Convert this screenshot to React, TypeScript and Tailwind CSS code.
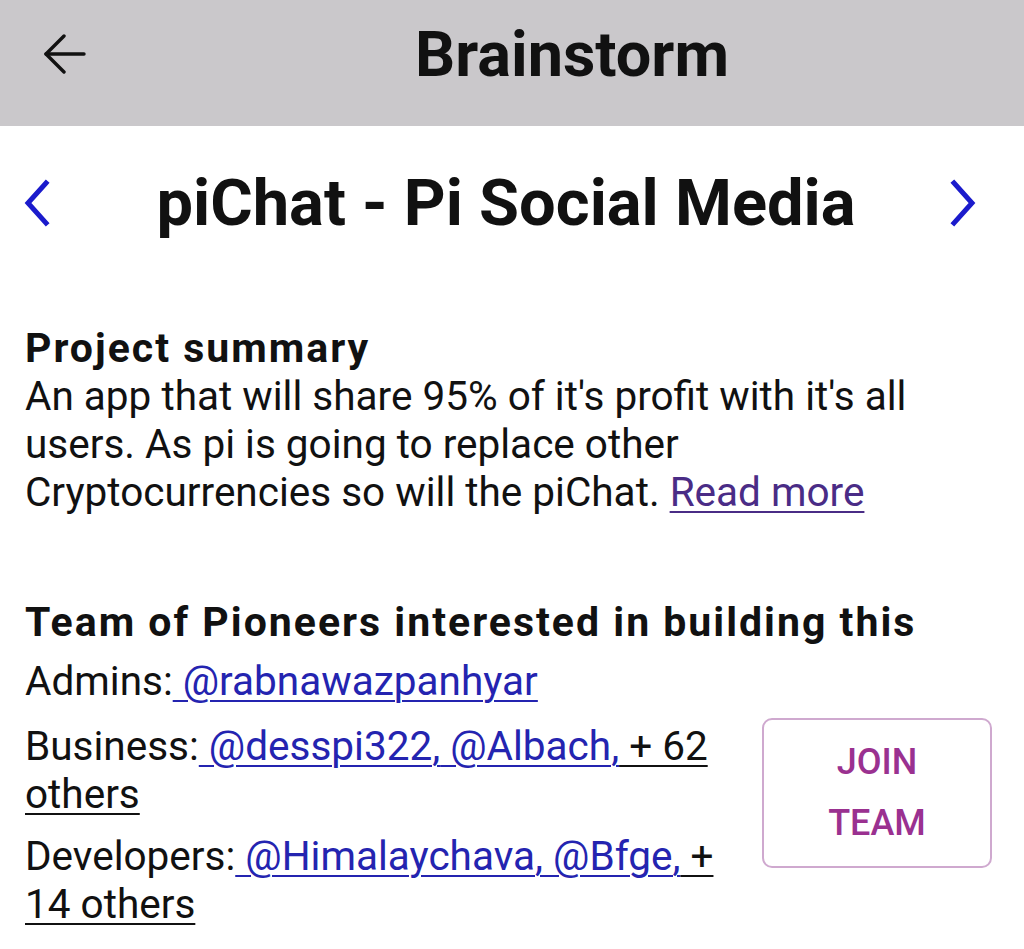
import { ReactNode } from "react";

const font = { fontFamily: "Roboto, 'Noto Sans', sans-serif" };

function BackArrow() {
  return (
    <svg width="42" height="42" viewBox="0 0 42 42" fill="none" stroke="#111" strokeWidth="3.4" strokeLinecap="round" strokeLinejoin="round">
      <path d="M40 21H2" />
      <path d="M20 3L2 21l18 18" />
    </svg>
  );
}

function Chevron({ dir }: { dir: "left" | "right" }) {
  return (
    <svg width="30" height="48" viewBox="0 0 30 48" fill="none" stroke="#1b1bcc" strokeWidth="5" strokeLinecap="square">
      {dir === "left" ? <path d="M24 4L6 24l18 20" /> : <path d="M6 4l18 20L6 44" />}
    </svg>
  );
}

function Mention({ children }: { children: ReactNode }) {
  return <span className="text-[#2424b0] underline decoration-[2px] underline-offset-[5px]">{children}</span>;
}

function Plain({ children }: { children: ReactNode }) {
  return <span className="underline decoration-[2px] underline-offset-[5px]">{children}</span>;
}

export default function App() {
  return (
    <div className="min-h-[949px] bg-white text-[#111]" style={font}>
      <header className="flex h-[126px] items-center bg-[#cac8cb] pb-[18px]">
        <div className="ml-[44px] flex w-[42px] items-center">
          <BackArrow />
        </div>
        <h1 className="ml-[329px] text-[63px] font-bold leading-none">Brainstorm</h1>
      </header>

      <div className="mt-[42px] flex h-[70px] items-center pl-[22px] pr-[46px]">
        <Chevron dir="left" />
        <h2 className="flex-1 pl-[12px] text-center text-[65px] font-bold leading-[70px]">piChat - Pi Social Media</h2>
        <Chevron dir="right" />
      </div>

      <section className="mt-[86px] px-[25px]">
        <h3 className="text-[41px] font-bold leading-[48px] tracking-[2px]">Project summary</h3>
        <p className="w-[890px] text-[40.5px] leading-[48px]">
          An app that will share 95% of it's profit with it's all users. As pi is going to replace other
          Cryptocurrencies so will the piChat.{" "}
          <span className="text-[#4a2c86] underline decoration-[2px] underline-offset-[5px]">Read more</span>
        </p>
      </section>

      <section className="mt-[82px] px-[25px]">
        <h3 className="text-[41px] font-bold leading-[48px] tracking-[2px]">Team of Pioneers interested in building this</h3>
        <div className="mt-[11px] flex items-center">
          <div className="flex w-[715px] flex-col text-[40.5px] leading-[48px]">
            <p>
              Admins:<Mention> @rabnawazpanhyar</Mention>
            </p>
            <p className="mt-[17px]">
              Business:<Mention> @desspi322,</Mention>
              <Mention> @Albach,</Mention>
              <Plain> + 62 others</Plain>
            </p>
            <p className="mt-[14px]">
              Developers:<Mention> @Himalaychava,</Mention>
              <Mention> @Bfge,</Mention>
              <Plain> + 14 others</Plain>
            </p>
          </div>
          <button className="ml-[22px] flex h-[150px] w-[230px] flex-col items-center justify-center rounded-[10px] border-2 border-[#cfa9cf] text-[36px] font-medium leading-[61px] text-[#9a3190]">
            <span>JOIN</span>
            <span>TEAM</span>
          </button>
        </div>
      </section>
    </div>
  );
}
